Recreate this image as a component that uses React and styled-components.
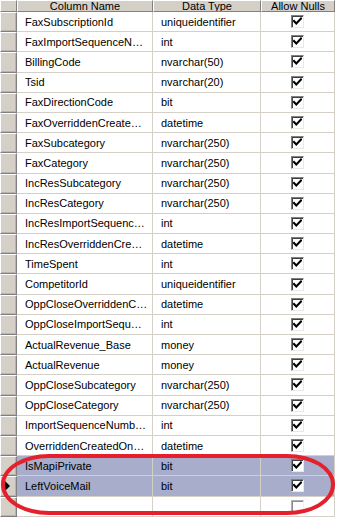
import styled, { createGlobalStyle } from "styled-components";

const GlobalStyle = createGlobalStyle`
  html, body {
    margin: 0;
    padding: 0;
    background: #ffffff;
  }
  body {
    font-family: "Liberation Sans", Arial, sans-serif;
    font-size: 11px;
    color: #000000;
  }
`;

const rows = [
  ["FaxSubscriptionId", "uniqueidentifier"],
  ["FaxImportSequenceN…", "int"],
  ["BillingCode", "nvarchar(50)"],
  ["Tsid", "nvarchar(20)"],
  ["FaxDirectionCode", "bit"],
  ["FaxOverriddenCreate…", "datetime"],
  ["FaxSubcategory", "nvarchar(250)"],
  ["FaxCategory", "nvarchar(250)"],
  ["IncResSubcategory", "nvarchar(250)"],
  ["IncResCategory", "nvarchar(250)"],
  ["IncResImportSequenc…", "int"],
  ["IncResOverriddenCre…", "datetime"],
  ["TimeSpent", "int"],
  ["CompetitorId", "uniqueidentifier"],
  ["OppCloseOverriddenC…", "datetime"],
  ["OppCloseImportSequ…", "int"],
  ["ActualRevenue_Base", "money"],
  ["ActualRevenue", "money"],
  ["OppCloseSubcategory", "nvarchar(250)"],
  ["OppCloseCategory", "nvarchar(250)"],
  ["ImportSequenceNumb…", "int"],
  ["OverriddenCreatedOn…", "datetime"],
  ["IsMapiPrivate", "bit", "selected"],
  ["LeftVoiceMail", "bit", "current"],
];

const Grid = styled.div`
  position: relative;
  width: 335px;
  display: grid;
  grid-template-columns: 17px 136px 108px 74px;
  grid-auto-rows: 20.2px;
  grid-template-rows: 12px;
`;

const HeaderCell = styled.div`
  box-sizing: border-box;
  background: #d4d0c8;
  border-top: 1px solid #ffffff;
  border-left: 1px solid #ffffff;
  border-right: 1px solid #808080;
  border-bottom: 1px solid #808080;
  display: flex;
  align-items: center;
  justify-content: center;
  font-size: 11px;
  line-height: 10px;
  overflow: hidden;
  white-space: nowrap;
`;

const Selector = styled.div`
  box-sizing: border-box;
  background: #d4d0c8;
  border-top: 1px solid #ffffff;
  border-left: 1px solid #ffffff;
  border-right: 1px solid #808080;
  border-bottom: 1px solid #808080;
  box-shadow: inset -1px -1px 0 #b8b4ac;
  display: flex;
  align-items: center;
  padding-left: 4px;
`;

const Arrow = styled.span`
  width: 0;
  height: 0;
  border-top: 5px solid transparent;
  border-bottom: 5px solid transparent;
  border-left: 5px solid #000000;
`;

const Cell = styled.div`
  box-sizing: border-box;
  background: ${(p) => (p.$selected ? "#a7adca" : "#ffffff")};
  border-right: 1px solid #d4d0c8;
  border-bottom: 1px solid #d4d0c8;
  display: flex;
  align-items: center;
  justify-content: ${(p) => (p.$center ? "center" : "flex-start")};
  padding-left: ${(p) => (p.$center ? "0" : "8px")};
  white-space: nowrap;
  overflow: hidden;
  font-size: 11px;
`;

const Box = styled.span`
  box-sizing: border-box;
  width: 13px;
  height: 13px;
  background: #ffffff;
  border-top: 1px solid #808080;
  border-left: 1px solid #808080;
  border-right: 1px solid #e8e8e8;
  border-bottom: 1px solid #e8e8e8;
  box-shadow: inset 1px 1px 0 #404040;
  display: flex;
  align-items: center;
  justify-content: center;
  opacity: ${(p) => (p.$dim ? 0.6 : 1)};
`;

const Ring = styled.div`
  position: absolute;
  left: 1px;
  top: 454px;
  width: 334px;
  height: 61px;
  box-sizing: border-box;
  border: 4px solid #e3202c;
  border-radius: 48px / 30px;
  pointer-events: none;
`;

const Check = ({ on = true, dim }) => (
  <Box $dim={dim}>
    {on && (
      <svg width="9" height="9" viewBox="0 0 9 9">
        <path
          d="M1 4 L3.3 6.5 L8 1.5"
          fill="none"
          stroke="#000"
          strokeWidth="2"
          strokeLinecap="square"
        />
      </svg>
    )}
  </Box>
);

export default function App() {
  return (
    <>
      <GlobalStyle />
      <Grid>
        <HeaderCell />
        <HeaderCell>Column Name</HeaderCell>
        <HeaderCell>Data Type</HeaderCell>
        <HeaderCell>Allow Nulls</HeaderCell>
        {rows.map(([name, type, state]) => {
          const sel = !!state;
          return [
            <Selector key={name + "s"}>{state === "current" && <Arrow />}</Selector>,
            <Cell key={name + "n"} $selected={sel}>
              {name}
            </Cell>,
            <Cell key={name + "t"} $selected={sel}>
              {type}
            </Cell>,
            <Cell key={name + "c"} $selected={sel} $center>
              <Check />
            </Cell>,
          ];
        })}
        <Selector />
        <Cell />
        <Cell />
        <Cell $center>
          <Check on={false} dim />
        </Cell>
        <Ring />
      </Grid>
    </>
  );
}
